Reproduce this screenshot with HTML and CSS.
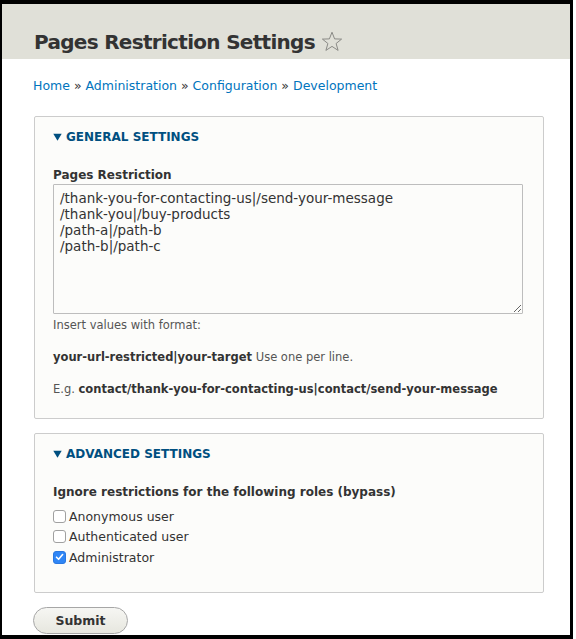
FILE: index.html
```html
<!DOCTYPE html>
<html>
<head>
<meta charset="utf-8">
<link rel="stylesheet" href="styles.css">
</head>
<body>
<div class="frame">
  <header class="page-head">
    <h1 class="page-title">Pages Restriction Settings <svg class="star" width="22" height="21" viewBox="0 0 22 21"><path d="M11 1.2 L13.6 7.9 L20.6 8.1 L15.1 12.5 L17.1 19.4 L11 15.4 L4.9 19.4 L6.9 12.5 L1.4 8.1 L8.4 7.9 Z" fill="none" stroke="#8a8a86" stroke-width="1"/></svg></h1>
  </header>
  <main class="content">
    <nav class="breadcrumb"><a href="#">Home</a> » <a href="#">Administration</a> » <a href="#">Configuration</a> » <a href="#">Development</a></nav>

    <section class="details">
      <div class="summary"><svg class="tri" width="9" height="8" viewBox="0 0 9 8"><path d="M0.3 0.8 L8.7 0.8 L4.5 7.8 Z" fill="#004f80"/></svg>GENERAL SETTINGS</div>
      <div class="field-label">Pages Restriction</div>
      <textarea class="area" rows="8">/thank-you-for-contacting-us|/send-your-message
/thank-you|/buy-products
/path-a|/path-b
/path-b|/path-c</textarea>
      <div class="desc">
        <p>Insert values with format:</p>
        <p><strong>your-url-restricted|your-target</strong> Use one per line.</p>
        <p>E.g. <strong>contact/thank-you-for-contacting-us|contact/send-your-message</strong></p>
      </div>
    </section>

    <section class="details second">
      <div class="summary"><svg class="tri" width="9" height="8" viewBox="0 0 9 8"><path d="M0.3 0.8 L8.7 0.8 L4.5 7.8 Z" fill="#004f80"/></svg>ADVANCED SETTINGS</div>
      <div class="field-label">Ignore restrictions for the following roles (bypass)</div>
      <div class="checks">
        <label class="check"><span class="box"></span>Anonymous user</label>
        <label class="check"><span class="box"></span>Authenticated user</label>
        <label class="check"><span class="box on"><svg width="9" height="8" viewBox="0 0 9 8"><path d="M1.5 4.2 L3.6 6.3 L7.6 1.5" fill="none" stroke="#fff" stroke-width="1.6" stroke-linecap="round" stroke-linejoin="round"/></svg></span>Administrator</label>
      </div>
    </section>

    <button class="submit" type="button">Submit</button>
  </main>
</div>
</body>
</html>
```

FILE: styles.css
```css
html, body {
  margin: 0;
  padding: 0;
  background: #ffffff;
}
body {
  font-family: "DejaVu Sans", "Liberation Sans", sans-serif;
  color: #333;
}
.frame {
  box-sizing: border-box;
  width: 573px;
  height: 639px;
  border-style: solid;
  border-color: #000;
  border-width: 4px 3px 4px 2px;
  overflow: hidden;
  background: #fff;
}
.page-head {
  background: #e0e0d8;
  height: 55px;
  box-sizing: border-box;
  padding: 27px 0 0 32px;
}
.page-title {
  margin: 0;
  font-size: 20px;
  letter-spacing: -0.7px;
  line-height: 22px;
  font-weight: bold;
  color: #333;
  display: flex;
  align-items: center;
  gap: 6px;
}
.star {
  display: block;
  margin-top: -2px;
}
.content {
  padding: 0 26px 0 31px;
}
.breadcrumb {
  margin-top: 18px;
  font-size: 12.5px;
  line-height: 18px;
  color: #333;
}
.breadcrumb a {
  color: #0074bd;
  text-decoration: none;
}
.details {
  margin: 21px 0 0 1px;
  border: 1px solid #ccc;
  border-radius: 2px;
  background: #fcfcfa;
  padding: 12px 18px 21px 18px;
}
.details.second {
  margin-top: 14px;
  padding-bottom: 24px;
}
.summary {
  display: flex;
  align-items: center;
  gap: 4px;
  font-size: 12px;
  line-height: 16px;
  font-weight: bold;
  color: #004f80;
}
.tri {
  display: block;
}
.field-label {
  margin-top: 22px;
  font-size: 12px;
  line-height: 16px;
  font-weight: bold;
  color: #333;
}
.area {
  display: block;
  box-sizing: border-box;
  width: 470px;
  height: 130px;
  margin-top: 1px;
  padding: 5px 6px;
  border: 1px solid #bdbdbd;
  border-radius: 1px;
  background: #fcfcfa;
  font-family: "DejaVu Sans", sans-serif;
  font-size: 13.5px;
  line-height: 16px;
  color: #333;
  resize: vertical;
}
.desc {
  margin-top: 3px;
  font-size: 11.5px;
  line-height: 16px;
  color: #555;
}
.desc p {
  margin: 0 0 16px 0;
}
.desc p:last-child {
  margin-bottom: 0;
}
.desc strong {
  color: #333;
}
.checks {
  margin-top: 6px;
  display: flex;
  flex-direction: column;
}
.check {
  display: flex;
  align-items: center;
  height: 20.5px;
  font-size: 12.5px;
  color: #333;
}
.box {
  box-sizing: border-box;
  width: 13px;
  height: 13px;
  border: 1px solid #a0a0a0;
  border-radius: 3px;
  background: #fff;
  margin-right: 3px;
  display: flex;
  align-items: center;
  justify-content: center;
}
.box.on {
  background: #2f86f6;
  border-color: #2a78e0;
}
.box svg {
  display: block;
}
.submit {
  display: block;
  margin-top: 14px;
  width: 95px;
  height: 27px;
  border: 1px solid #a6a6a6;
  border-radius: 20px;
  background: linear-gradient(to bottom, #f6f6f3, #e7e7df);
  font-family: "DejaVu Sans", sans-serif;
  font-size: 12.5px;
  font-weight: bold;
  color: #333;
  padding: 0;
}
```
